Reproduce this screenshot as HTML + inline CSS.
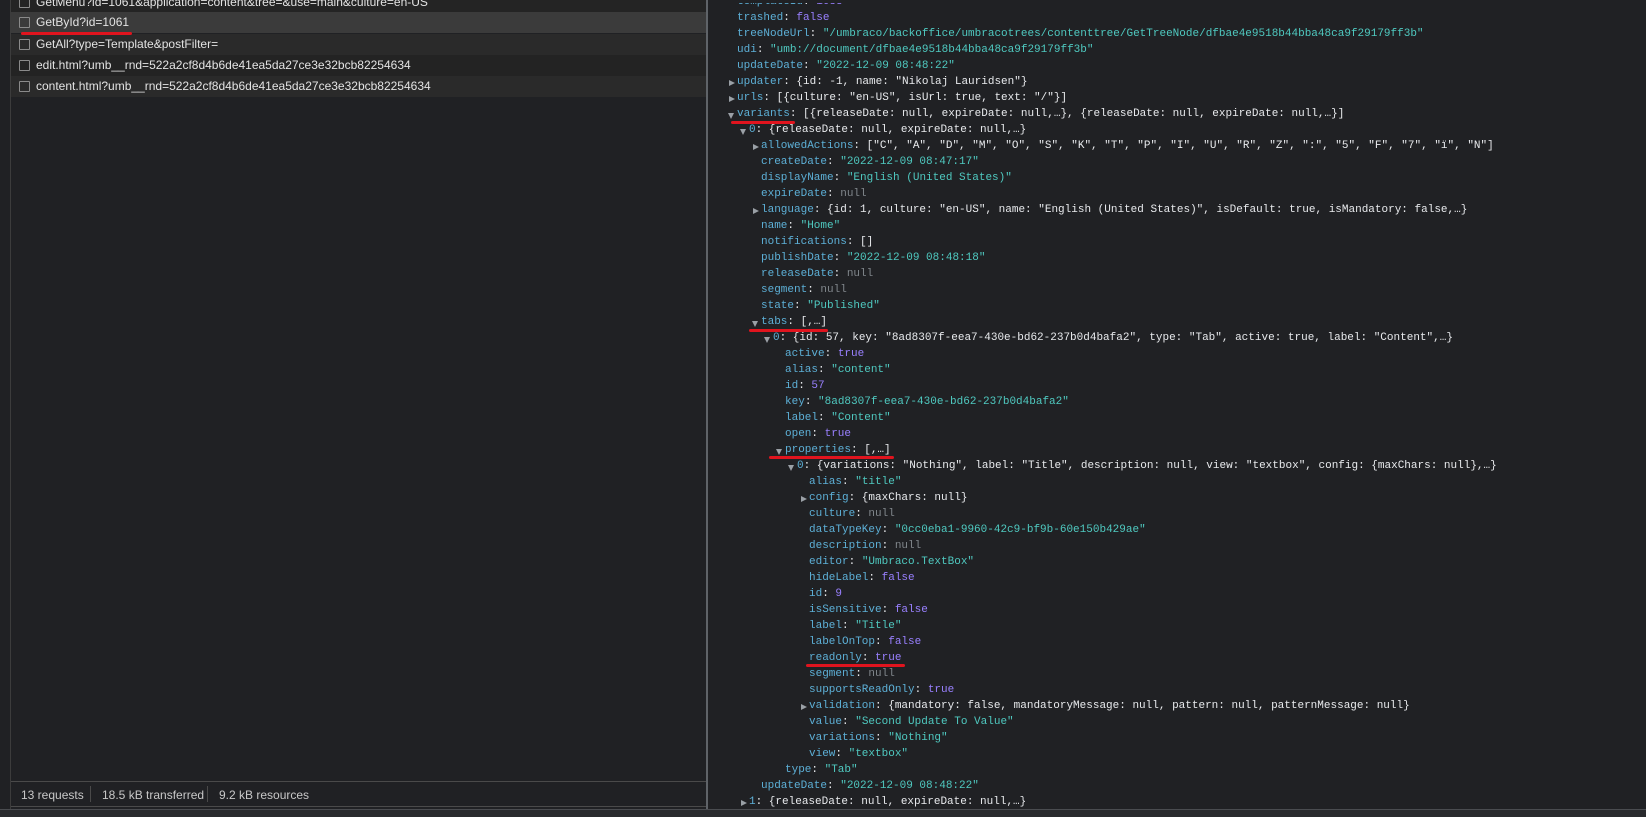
<!DOCTYPE html>
<html><head><meta charset="utf-8"><style>
html,body{margin:0;padding:0;width:1646px;height:816px;overflow:hidden;background:#202124;}
.lp{position:absolute;left:11px;top:0;width:695px;height:781px;background:#202124;}
.strip{position:absolute;left:0;top:0;width:10px;height:809px;background:#202124;border-right:1px solid #3c3c3c;}
.row{position:absolute;left:11px;width:695px;height:21px;font:12px "Liberation Sans",sans-serif;color:#e3e3e3;line-height:21px;}
.row .cb{position:absolute;left:8px;top:5px;width:9px;height:9px;border:1px solid #8a8a8a;border-radius:1px;}
.row span{position:absolute;left:25px;white-space:pre;}
.div{position:absolute;left:706px;top:0;width:2px;height:809px;background:#5f6368;}
.sb{position:absolute;left:11px;top:781px;width:695px;height:26px;border-top:1px solid #4a4a4a;border-bottom:1px solid #4a4a4a;box-sizing:border-box;font:12px "Liberation Sans",sans-serif;color:#c8c8c8;background:#202124;}
.sb span{position:absolute;top:6px;white-space:pre;}
.sb i{position:absolute;top:4px;width:1px;height:16px;background:#4a4a4a;}
.bot{position:absolute;left:0;top:809px;width:1646px;height:7px;background:#292a2d;border-top:1px solid #4a4c50;}
.c{position:absolute;left:0;top:3px;width:1646px;height:806px;overflow:hidden;}
.l{position:absolute;height:16px;line-height:16px;font:11px "Liberation Mono",monospace;white-space:pre;color:#e8eaed;}
.k{color:#5db0d7}.s{color:#4fc9c0}.b{color:#9980ff}.n{color:#80868b}
.t{position:absolute;left:-9px;top:5px;width:0;height:0;}
.tr{border-top:3.5px solid transparent;border-bottom:3.5px solid transparent;border-left:6px solid #9aa0a6;top:4px;left:-8px;}
.td{border-left:3.5px solid transparent;border-right:3.5px solid transparent;border-top:6px solid #9aa0a6;top:5px;}
.red{position:absolute;height:3px;background:#e0141e;border-radius:2px;}
</style></head><body>
<div class="strip"></div>
<div class="lp"></div>
<div class="row" style="top:-8px;background:#242424"><div class="cb"></div><span>GetMenu?id=1061&amp;application=content&amp;tree=&amp;use=main&amp;culture=en-US</span></div>
<div class="row" style="top:12px;background:#3b3b3b"><div class="cb"></div><span>GetById?id=1061</span></div>
<div class="row" style="top:34px;background:#2a2a2a"><div class="cb"></div><span>GetAll?type=Template&amp;postFilter=</span></div>
<div class="row" style="top:55px;background:#232323"><div class="cb"></div><span>edit.html?umb__rnd=522a2cf8d4b6de41ea5da27ce3e32bcb82254634</span></div>
<div class="row" style="top:76px;background:#2a2a2a"><div class="cb"></div><span>content.html?umb__rnd=522a2cf8d4b6de41ea5da27ce3e32bcb82254634</span></div>
<div class="red" style="left:21px;top:32px;width:111px"></div>
<div class="sb"><span style="left:10px">13 requests</span><i style="left:79px"></i><span style="left:91px">18.5 kB transferred</span><i style="left:196px"></i><span style="left:208px">9.2 kB resources</span></div>
<div class="div"></div>

<div class="c">
<div class="l" style="left:737px;top:-7px"><span class="k">templateId</span>: <span class="b">1055</span></div>
<div class="l" style="left:737px;top:9px"><span class="k">trashed</span>: <span class="b">false</span></div>
<div class="l" style="left:737px;top:25px"><span class="k">treeNodeUrl</span>: <span class="s">"/umbraco/backoffice/umbracotrees/contenttree/GetTreeNode/dfbae4e9518b44bba48ca9f29179ff3b"</span></div>
<div class="l" style="left:737px;top:41px"><span class="k">udi</span>: <span class="s">"umb://document/dfbae4e9518b44bba48ca9f29179ff3b"</span></div>
<div class="l" style="left:737px;top:57px"><span class="k">updateDate</span>: <span class="s">"2022-12-09 08:48:22"</span></div>
<div class="l" style="left:737px;top:73px"><i class="t tr"></i><span class="k">updater</span>: {id: -1, name: "Nikolaj Lauridsen"}</div>
<div class="l" style="left:737px;top:89px"><i class="t tr"></i><span class="k">urls</span>: [{culture: "en-US", isUrl: true, text: "/"}]</div>
<div class="l" style="left:737px;top:105px"><i class="t td"></i><span class="k">variants</span>: [{releaseDate: null, expireDate: null,…}, {releaseDate: null, expireDate: null,…}]</div>
<div class="l" style="left:749px;top:121px"><i class="t td"></i><span class="k">0</span>: {releaseDate: null, expireDate: null,…}</div>
<div class="l" style="left:761px;top:137px"><i class="t tr"></i><span class="k">allowedActions</span>: ["C", "A", "D", "M", "O", "S", "K", "T", "P", "I", "U", "R", "Z", ":", "5", "F", "7", "ï", "N"]</div>
<div class="l" style="left:761px;top:153px"><span class="k">createDate</span>: <span class="s">"2022-12-09 08:47:17"</span></div>
<div class="l" style="left:761px;top:169px"><span class="k">displayName</span>: <span class="s">"English (United States)"</span></div>
<div class="l" style="left:761px;top:185px"><span class="k">expireDate</span>: <span class="n">null</span></div>
<div class="l" style="left:761px;top:201px"><i class="t tr"></i><span class="k">language</span>: {id: 1, culture: "en-US", name: "English (United States)", isDefault: true, isMandatory: false,…}</div>
<div class="l" style="left:761px;top:217px"><span class="k">name</span>: <span class="s">"Home"</span></div>
<div class="l" style="left:761px;top:233px"><span class="k">notifications</span>: []</div>
<div class="l" style="left:761px;top:249px"><span class="k">publishDate</span>: <span class="s">"2022-12-09 08:48:18"</span></div>
<div class="l" style="left:761px;top:265px"><span class="k">releaseDate</span>: <span class="n">null</span></div>
<div class="l" style="left:761px;top:281px"><span class="k">segment</span>: <span class="n">null</span></div>
<div class="l" style="left:761px;top:297px"><span class="k">state</span>: <span class="s">"Published"</span></div>
<div class="l" style="left:761px;top:313px"><i class="t td"></i><span class="k">tabs</span>: [,…]</div>
<div class="l" style="left:773px;top:329px"><i class="t td"></i><span class="k">0</span>: {id: 57, key: "8ad8307f-eea7-430e-bd62-237b0d4bafa2", type: "Tab", active: true, label: "Content",…}</div>
<div class="l" style="left:785px;top:345px"><span class="k">active</span>: <span class="b">true</span></div>
<div class="l" style="left:785px;top:361px"><span class="k">alias</span>: <span class="s">"content"</span></div>
<div class="l" style="left:785px;top:377px"><span class="k">id</span>: <span class="b">57</span></div>
<div class="l" style="left:785px;top:393px"><span class="k">key</span>: <span class="s">"8ad8307f-eea7-430e-bd62-237b0d4bafa2"</span></div>
<div class="l" style="left:785px;top:409px"><span class="k">label</span>: <span class="s">"Content"</span></div>
<div class="l" style="left:785px;top:425px"><span class="k">open</span>: <span class="b">true</span></div>
<div class="l" style="left:785px;top:441px"><i class="t td"></i><span class="k">properties</span>: [,…]</div>
<div class="l" style="left:797px;top:457px"><i class="t td"></i><span class="k">0</span>: {variations: "Nothing", label: "Title", description: null, view: "textbox", config: {maxChars: null},…}</div>
<div class="l" style="left:809px;top:473px"><span class="k">alias</span>: <span class="s">"title"</span></div>
<div class="l" style="left:809px;top:489px"><i class="t tr"></i><span class="k">config</span>: {maxChars: null}</div>
<div class="l" style="left:809px;top:505px"><span class="k">culture</span>: <span class="n">null</span></div>
<div class="l" style="left:809px;top:521px"><span class="k">dataTypeKey</span>: <span class="s">"0cc0eba1-9960-42c9-bf9b-60e150b429ae"</span></div>
<div class="l" style="left:809px;top:537px"><span class="k">description</span>: <span class="n">null</span></div>
<div class="l" style="left:809px;top:553px"><span class="k">editor</span>: <span class="s">"Umbraco.TextBox"</span></div>
<div class="l" style="left:809px;top:569px"><span class="k">hideLabel</span>: <span class="b">false</span></div>
<div class="l" style="left:809px;top:585px"><span class="k">id</span>: <span class="b">9</span></div>
<div class="l" style="left:809px;top:601px"><span class="k">isSensitive</span>: <span class="b">false</span></div>
<div class="l" style="left:809px;top:617px"><span class="k">label</span>: <span class="s">"Title"</span></div>
<div class="l" style="left:809px;top:633px"><span class="k">labelOnTop</span>: <span class="b">false</span></div>
<div class="l" style="left:809px;top:649px"><span class="k">readonly</span>: <span class="b">true</span></div>
<div class="l" style="left:809px;top:665px"><span class="k">segment</span>: <span class="n">null</span></div>
<div class="l" style="left:809px;top:681px"><span class="k">supportsReadOnly</span>: <span class="b">true</span></div>
<div class="l" style="left:809px;top:697px"><i class="t tr"></i><span class="k">validation</span>: {mandatory: false, mandatoryMessage: null, pattern: null, patternMessage: null}</div>
<div class="l" style="left:809px;top:713px"><span class="k">value</span>: <span class="s">"Second Update To Value"</span></div>
<div class="l" style="left:809px;top:729px"><span class="k">variations</span>: <span class="s">"Nothing"</span></div>
<div class="l" style="left:809px;top:745px"><span class="k">view</span>: <span class="s">"textbox"</span></div>
<div class="l" style="left:785px;top:761px"><span class="k">type</span>: <span class="s">"Tab"</span></div>
<div class="l" style="left:761px;top:777px"><span class="k">updateDate</span>: <span class="s">"2022-12-09 08:48:22"</span></div>
<div class="l" style="left:749px;top:793px"><i class="t tr"></i><span class="k">1</span>: {releaseDate: null, expireDate: null,…}</div>
</div>

<div class="red" style="left:731px;top:121px;width:64px"></div>
<div class="red" style="left:749px;top:329px;width:79px"></div>
<div class="red" style="left:769px;top:456px;width:125px"></div>
<div class="red" style="left:806px;top:664px;width:99px"></div>
<div class="bot"></div>
</body></html>
